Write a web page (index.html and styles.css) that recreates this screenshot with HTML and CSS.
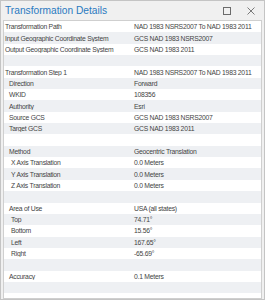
FILE: index.html
```html
<!DOCTYPE html>
<html>
<head>
    <meta name="viewport" content="width=device-width, initial-scale=1.0">
    <title>Transformation Details</title>
    <link rel="stylesheet" href="styles.css">
</head>
<body>
<div class="window">
    <div class="titlebar">
        <span class="title">Transformation Details</span>
        <span class="btn max"></span>
        <span class="btn close">
            <svg width="8" height="8" viewBox="0 0 8 8"><path d="M0.5 0.5 L7.5 7.5 M7.5 0.5 L0.5 7.5" stroke="#6b6b6b" stroke-width="0.9"/></svg>
        </span>
    </div>
    <div class="grid">
        <div class="row"><span class="lbl">Transformation Path</span><span class="val">NAD 1983 NSRS2007 To NAD 1983 2011</span></div>
        <div class="row"><span class="lbl">Input Geographic Coordinate System</span><span class="val">GCS NAD 1983 NSRS2007</span></div>
        <div class="row"><span class="lbl">Output Geographic Coordinate System</span><span class="val">GCS NAD 1983 2011</span></div>
        <div class="row"></div>
        <div class="row"><span class="lbl">Transformation Step 1</span><span class="val">NAD 1983 NSRS2007 To NAD 1983 2011</span></div>
        <div class="row"><span class="lbl sub">Direction</span><span class="val">Forward</span></div>
        <div class="row"><span class="lbl sub">WKID</span><span class="val">108356</span></div>
        <div class="row"><span class="lbl sub">Authority</span><span class="val">Esri</span></div>
        <div class="row"><span class="lbl sub">Source GCS</span><span class="val">GCS NAD 1983 NSRS2007</span></div>
        <div class="row"><span class="lbl sub">Target GCS</span><span class="val">GCS NAD 1983 2011</span></div>
        <div class="row"></div>
        <div class="row"><span class="lbl sub">Method</span><span class="val">Geocentric Translation</span></div>
        <div class="row"><span class="lbl sub2">X Axis Translation</span><span class="val">0.0 Meters</span></div>
        <div class="row"><span class="lbl sub2">Y Axis Translation</span><span class="val">0.0 Meters</span></div>
        <div class="row"><span class="lbl sub2">Z Axis Translation</span><span class="val">0.0 Meters</span></div>
        <div class="row"></div>
        <div class="row"><span class="lbl sub">Area of Use</span><span class="val">USA (all states)</span></div>
        <div class="row"><span class="lbl sub2">Top</span><span class="val">74.71°</span></div>
        <div class="row"><span class="lbl sub2">Bottom</span><span class="val">15.56°</span></div>
        <div class="row"><span class="lbl sub2">Left</span><span class="val">167.65°</span></div>
        <div class="row"><span class="lbl sub2">Right</span><span class="val">-65.69°</span></div>
        <div class="row"></div>
        <div class="row"><span class="lbl sub">Accuracy</span><span class="val">0.1 Meters</span></div>
        <div class="row"></div>
    </div>
</div>
</body>
</html>
```

FILE: styles.css
```css
body {
    margin: 0;
    font-family: "Liberation Sans", Arial, sans-serif;
}

.window {
    width: 265px;
    height: 300px;
    box-sizing: border-box;
    border: 1px solid #c4c4c4;
    background-color: #f0f0f0;
    display: flex;
    flex-direction: column;
}

.titlebar {
    height: 19px;
    display: flex;
    align-items: center;
    padding: 0 0 0 4px;
}

.title {
    flex: 1;
    color: #2a7ac0;
    font-size: 10.2px;
    margin-top: -1px;
}

.btn {
    width: 24px;
    height: 16px;
    display: flex;
    align-items: center;
    justify-content: center;
}

.max::before {
    content: "";
    width: 6px;
    height: 6px;
    border: 1px solid #6b6b6b;
}

.close {
    margin-right: 1px;
}

.grid {
    margin: 0 2px 0 2px;
    height: 277px;
    border: 1px solid #cfcfcf;
    background-color: #ffffff;
    overflow: hidden;
}

.row {
    height: 11.35px;
    display: flex;
    align-items: center;
    font-size: 6.8px;
    letter-spacing: -0.25px;
    color: #444444;
    white-space: nowrap;
}

.row:nth-child(even) {
    background-color: #eef0f3;
}

.lbl {
    flex: none;
    box-sizing: border-box;
    width: 130px;
    padding-left: 1px;
    overflow: hidden;
}

.lbl.sub {
    padding-left: 5px;
}

.lbl.sub2 {
    padding-left: 7px;
}
```
